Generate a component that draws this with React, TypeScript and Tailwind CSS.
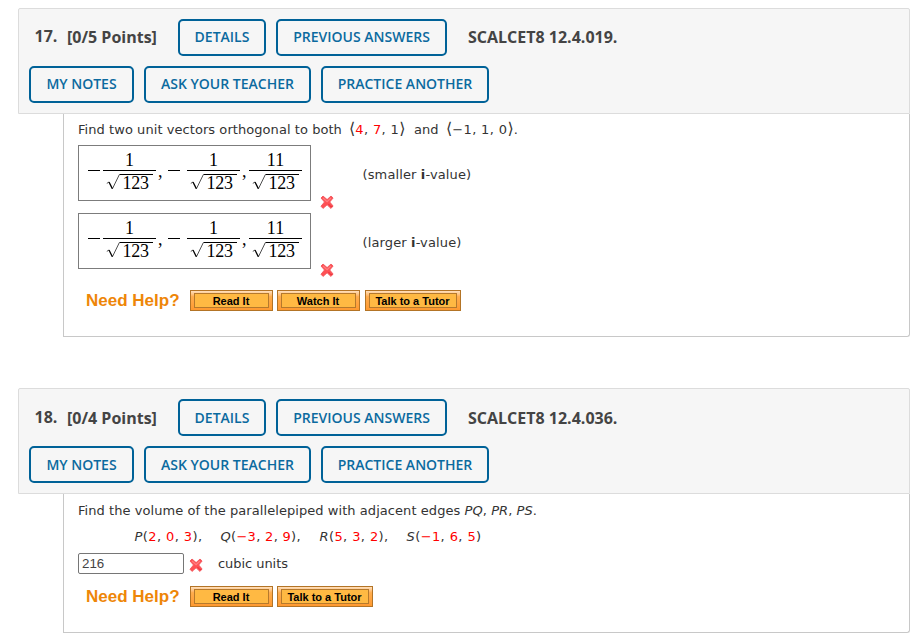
import type { ReactNode } from 'react';
import clsx from 'clsx';

interface HeaderProps {
  number: string;
  points: string;
  source: string;
  raised?: boolean;
}

function OutlineButton({ children, className }: { children: ReactNode; className: string }) {
  return (
    <button
      className={clsx(
        'h-[37px] shrink-0 rounded-[5px] border-2 border-[#006298] text-center text-[14px] leading-[31px] font-semibold whitespace-nowrap text-[#0b6a9f]',
        className
      )}
    >
      {children}
    </button>
  );
}

function QuestionHeader({ number, points, source, raised }: HeaderProps) {
  // labels of a raised header sit one pixel higher in their row
  const lift = raised ? 'pb-0.5' : 'pb-0';
  return (
    <header className="h-[106px] w-[892px] rounded-t-[2px] border border-[#dcdcdc] bg-[#f6f6f6] pt-2.5 pl-2.5 font-['Open_Sans',sans-serif] text-[16px] font-bold text-[#444]">
      <div className="flex h-[37px] items-center">
        <span className={clsx('w-8 pl-[5.5px]', raised ? 'pb-[3px]' : 'pb-0.5')}>{number}</span>
        <span className={clsx('ml-1.5 w-[111px] whitespace-nowrap', lift)}>{points}</span>
        <OutlineButton className={clsx('w-[88px]', lift)}>DETAILS</OutlineButton>
        <OutlineButton className={clsx('ml-2.5 w-[171px]', lift)}>PREVIOUS ANSWERS</OutlineButton>
        <span className={clsx('ml-[21px] whitespace-nowrap', lift)}>{source}</span>
      </div>
      <div className="mt-2.5 flex gap-2.5">
        <OutlineButton className={clsx('w-[105px]', lift)}>MY NOTES</OutlineButton>
        <OutlineButton className={clsx('w-[167px]', lift)}>ASK YOUR TEACHER</OutlineButton>
        <OutlineButton className={clsx('w-[168px]', lift)}>PRACTICE ANOTHER</OutlineButton>
      </div>
    </header>
  );
}

function WrongMark() {
  return (
    <svg width="14" height="14" viewBox="0 0 14 14" className="shrink-0" aria-label="incorrect">
      <path
        d="M3 1 L7.1 4.6 L11 1 L13.1 3 L9.7 7 L13.1 11 L11 13.4 L7.1 9.8 L3 13.4 L1 11.2 L4.5 7 L1 3 Z"
        fill="#ff5054"
        stroke="#f0565c"
        strokeWidth="0.9"
        strokeLinejoin="round"
      />
      <path d="M3 3 L7.1 6.6 L11 3" fill="none" stroke="#ff7f80" strokeWidth="1.2" />
      <path d="M8.5 9 L11.3 12 L12.3 11" fill="none" stroke="#e8323b" strokeWidth="1" />
    </svg>
  );
}

function Minus() {
  return <span className="mt-6 h-px w-3 bg-black" />;
}

function Fraction({ top, root }: { top: string; root: string }) {
  return (
    <span className="flex w-[53px] flex-col items-center">
      <span className="h-6 pt-[4px] text-[18px] leading-5">{top}</span>
      <span className="h-px w-full bg-black" />
      <span className="mt-[3px] flex">
        <svg width="14" height="17" viewBox="0 0 14 17">
          <path d="M0.8 9.4 L3 8" fill="none" stroke="#000" strokeWidth="0.7" />
          <path d="M3 8 L6.3 14.6" fill="none" stroke="#000" strokeWidth="1.3" />
          <path d="M6.3 15 L13.4 0.5 H14" fill="none" stroke="#000" strokeWidth="0.7" />
        </svg>
        <span className="h-5 w-[33px] border-t border-black pl-[2.5px] text-[18px] leading-[17px] tracking-[-0.2px]">{root}</span>
      </span>
    </span>
  );
}

function VectorAnswer({ label }: { label: string }) {
  return (
    <div className="flex h-14">
      <div className="flex h-14 w-[233px] border border-[#7c7c7c] pl-[9px] font-['Liberation_Serif',serif] text-[18px] text-black">
        <Minus />
        <span className="ml-[3px]"><Fraction top="1" root="123" /></span>
        <span className="mt-[15px] ml-[2px] w-[10px] leading-5">,</span>
        <Minus />
        <span className="ml-[7px]"><Fraction top="1" root="123" /></span>
        <span className="mt-[15px] ml-[2px] w-[7px] leading-5">,</span>
        <Fraction top="11" root="123" />
      </div>
      <div className="mt-[50px] ml-[9px]"><WrongMark /></div>
      <p className="ml-[28.5px] pt-[20px] leading-5 tracking-[0.13px]">
        ({label} <b>i</b>-value)
      </p>
    </div>
  );
}

function HelpButton({ children, wide }: { children: ReactNode; wide?: boolean }) {
  return (
    <button
      className={clsx(
        'h-[21px] shrink-0 border border-[#b37426] bg-linear-to-b from-[#ffdfbc] via-[#ffad4d] via-30% to-[#ff9930] p-[2px] px-[3px]',
        wide ? 'w-24' : 'w-[83px]'
      )}
    >
      <span className="block h-[15px] border border-[#b6792c] bg-[#ffb943] pr-[1px] font-['Liberation_Sans',sans-serif] text-[11px] leading-[14px] font-bold whitespace-nowrap text-black">
        {children}
      </span>
    </button>
  );
}

function NeedHelp({ children }: { children: ReactNode }) {
  return (
    <div className="flex h-[21px] pl-2">
      <span className="w-[104px] font-['Liberation_Sans',sans-serif] text-[17px] leading-[22px] font-bold whitespace-nowrap text-[#ee8608]">
        Need Help?
      </span>
      {children}
    </div>
  );
}

function Red({ children }: { children: ReactNode }) {
  return <span className="text-[#f00]">{children}</span>;
}

function Bracket({ children }: { children: ReactNode }) {
  return <span className="text-[16px] leading-none tracking-normal">{children}</span>;
}

function App() {
  return (
    <main className="h-[637px] w-[917px] overflow-hidden bg-white pt-2 pl-[18px] font-['DejaVu_Sans',sans-serif] text-[13px] text-[#333]">
      <section>
        <QuestionHeader number="17." points="[0/5 Points]" source="SCALCET8 12.4.019." raised />
        <div className="ml-[45px] h-[223px] w-[847px] rounded-br-[3px] border border-t-0 border-[#c8c8c8] pl-3.5">
          <p className="flex h-[31px] items-center whitespace-nowrap">
            <span className="w-[271px] tracking-[0.06px]">Find two unit vectors orthogonal to both</span>
            <span className="w-[65px] tracking-[0.36px]">
              <Bracket>⟨</Bracket><Red>4</Red>, <Red>7</Red>, 1<Bracket>⟩</Bracket>
            </span>
            <span className="w-[32px]">and</span>
            <span className="tracking-[0.36px]">
              <Bracket>⟨</Bracket>−1, 1, 0<Bracket>⟩</Bracket>.
            </span>
          </p>
          <VectorAnswer label="smaller" />
          <div className="h-3" />
          <VectorAnswer label="larger" />
          <div className="mt-[21px]">
            <NeedHelp>
              <HelpButton>Read It</HelpButton>
              <span className="w-1" />
              <HelpButton>Watch It</HelpButton>
              <span className="w-[5px]" />
              <HelpButton wide>Talk to a Tutor</HelpButton>
            </NeedHelp>
          </div>
        </div>
      </section>

      <section className="mt-[51px]">
        <QuestionHeader number="18." points="[0/4 Points]" source="SCALCET8 12.4.036." />
        <div className="ml-[45px] h-[139px] w-[847px] rounded-br-[3px] border border-t-0 border-[#c8c8c8] pl-3.5">
          <p className="pt-[7px] leading-5 tracking-[0.06px] whitespace-nowrap">
            Find the volume of the parallelepiped with adjacent edges <i>PQ</i>, <i>PR</i>, <i>PS</i>.
          </p>
          <p className="mt-[6px] flex pl-[56.5px] leading-5 tracking-[0.4px] whitespace-nowrap">
            <span className="w-[86px]"><i>P</i>(<Red>2</Red>, <Red>0</Red>, <Red>3</Red>),</span>
            <span className="w-[99px] tracking-[0.3px]"><i>Q</i>(<Red>−3</Red>, <Red>2</Red>, <Red>9</Red>),</span>
            <span className="w-[87px]"><i>R</i>(<Red>5</Red>, <Red>3</Red>, <Red>2</Red>),</span>
            <span><i>S</i>(<Red>−1</Red>, <Red>6</Red>, <Red>5</Red>)</span>
          </p>
          <div className="mt-[6px] flex h-[21px]">
            <input
              className="h-[21px] w-[106px] rounded-[2px] border border-[#767676] px-[3px] font-['Liberation_Sans',sans-serif] text-[13.33px] text-[#444]"
              defaultValue="216"
            />
            <div className="mt-[5px] ml-[5px]"><WrongMark /></div>
            <span className="ml-[15px] pt-px leading-5 tracking-[-0.05px]">cubic units</span>
          </div>
          <div className="mt-3">
            <NeedHelp>
              <HelpButton>Read It</HelpButton>
              <span className="w-1" />
              <HelpButton wide>Talk to a Tutor</HelpButton>
            </NeedHelp>
          </div>
        </div>
      </section>
    </main>
  );
}

export default App;
